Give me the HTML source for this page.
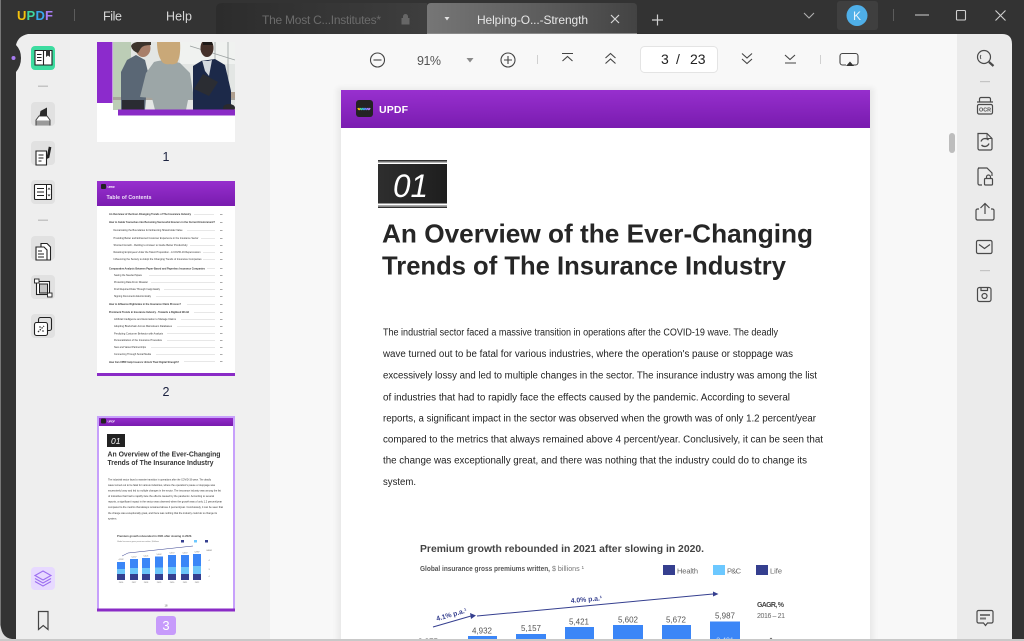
<!DOCTYPE html>
<html><head><meta charset="utf-8"><title>UPDF</title>
<style>
html,body{margin:0;padding:0;background:#333;width:1024px;height:641px;overflow:hidden}
svg{display:block;font-family:"Liberation Sans",sans-serif;filter:blur(.3px)}
</style></head><body>
<svg width="1024" height="641" viewBox="0 0 1024 641" xmlns="http://www.w3.org/2000/svg">
<defs>
<linearGradient id="hd" x1="0" y1="0" x2="0.08" y2="1"><stop offset="0" stop-color="#9830cf"/><stop offset="1" stop-color="#7a1cb0"/></linearGradient>
<linearGradient id="tab2" x1="0" x2="1" y1="0" y2="0"><stop offset="0" stop-color="#767676"/><stop offset=".55" stop-color="#5c5c5c"/><stop offset="1" stop-color="#434343"/></linearGradient>
<linearGradient id="tab1" x1="0" x2="1" y1="0" y2="0"><stop offset="0" stop-color="#2c2c2c"/><stop offset="1" stop-color="#3e3e3e"/></linearGradient>
<linearGradient id="box01" x1="0" x2="1" y1="0" y2="0"><stop offset="0" stop-color="#2e2e2e"/><stop offset="1" stop-color="#1e1e1e"/></linearGradient>
<filter id="b1" x="-5%" y="-5%" width="110%" height="110%"><feGaussianBlur stdDeviation=".25"/></filter>
<filter id="sh" x="-5%" y="-5%" width="110%" height="110%"><feGaussianBlur stdDeviation="3"/></filter>
<clipPath id="panel"><path d="M28 34H1002Q1012 34 1012 44V639H16V72Q21 66 21 58Q21 50 16 45Q18 36 28 34Z"/></clipPath>
<clipPath id="ph"><rect x="113" y="42" width="122" height="68"/></clipPath>
</defs>

<!-- window -->
<rect width="1024" height="641" fill="#333"/>
<rect x="0" width="1" height="641" fill="#777"/>
<path d="M0 625V639H16V639H12Q3 638 1 628Z" fill="#dcdcdc"/>

<!-- title bar -->
<g font-weight="bold" font-size="13">
<text x="17" y="20" fill="#f4c20d">U</text><text x="26.500" y="20" fill="#3ed6a0">P</text><text x="35.500" y="20" fill="#38a6ee">D</text><text x="45" y="20" fill="#a97cf5">F</text></g>
<rect x="74" y="9" width="1" height="12" fill="#5c5c5c"/>
<text x="103" y="20.500" font-size="12.500" fill="#d8d8d8" textLength="19">File</text>
<text x="166" y="20.500" font-size="12.500" fill="#d8d8d8" textLength="26">Help</text>

<path d="M216 34V9Q216 3 222 3H427V34Z" fill="url(#tab1)"/>
<text x="262" y="24" font-size="12" fill="#6b6b6b" textLength="119">The Most C...Institutes*</text>
<path d="M402 18.500h7v5.500h-7zM403.500 18.500v-2a2 2 0 0 1 4 0v2" fill="#666" stroke="#666"/>
<path d="M427 34V7Q427 3 431 3H633Q637 3 637 7V34Z" fill="url(#tab2)"/>
<rect x="427" y="33" width="210" height="1" fill="#8a8a8a"/>
<path d="M444.500 17h5l-2.500 3.500z" fill="#e4e4e4"/>
<text x="477" y="24" font-size="12" fill="#e6e6e6" textLength="111">Helping-O...-Strength</text>
<path d="M611 15l8 8M619 15l-8 8" stroke="#d8d8d8" stroke-width="1.200" fill="none"/>
<path d="M652 20h11M657.500 14.500v11" stroke="#d0d0d0" stroke-width="1.200" fill="none"/>

<path d="M804 13l5 5 5-5" stroke="#b0b0b0" stroke-width="1.100" fill="none"/>
<rect x="837" y="1" width="41" height="29" rx="3" fill="#3f3f3f"/>
<circle cx="857" cy="15.500" r="10.500" fill="#4fafe8"/>
<text x="857" y="20" font-size="12" fill="#e8f4fc" text-anchor="middle">K</text>
<rect x="893" y="9" width="1" height="12" fill="#5c5c5c"/>
<rect x="915" y="14.500" width="14" height="1" fill="#d0d0d0"/>
<rect x="956.500" y="10.500" width="9" height="9.500" rx="1" fill="none" stroke="#d0d0d0" stroke-width="1.100"/>
<path d="M995.500 10.500l10 10M1005.500 10.500l-10 10" stroke="#d0d0d0" stroke-width="1.100" fill="none"/>

<!-- panels -->
<g clip-path="url(#panel)">
<rect x="16" y="34" width="54" height="606" fill="#eeeeee"/>
<rect x="70" y="34" width="200" height="606" fill="#f0f0f0"/>
<rect x="270" y="34" width="687" height="606" fill="#f8f8f8"/>
<rect x="957" y="34" width="55" height="606" fill="#ebebeb"/>
<rect x="337" y="88" width="537" height="560" fill="#000" opacity=".06" filter="url(#sh)"/>
</g>
<circle cx="13.500" cy="58" r="2" fill="#a77cf0"/>

<!-- left rail icons -->
<rect x="31" y="46" width="24" height="24" rx="4" fill="#3ddca0"/>
<g stroke="#222" stroke-width="1.100" fill="#fff">
<path d="M35 50.500h8.500v14.500H35zM43.500 50.500H52v14.500h-8.500z"/>
<path d="M37 54.500h4.500M37 57.500h4.500M37 60.500h4.500" fill="none"/>
</g>
<path d="M46 50h4v7l-2-1.500-2 1.500z" fill="#333"/>
<rect x="38" y="85.500" width="10" height="1.500" fill="#c4c4c4"/>

<rect x="31" y="102" width="24" height="24" rx="4" fill="#e1e1e1"/>
<path d="M36 125v-5l3-4h8l3 4v5z" fill="#fff" stroke="#444"/>
<rect x="36.500" y="120.500" width="13" height="5" fill="#9a9a9a"/>
<path d="M39.500 116l1-5 6.500-3.500v8.500z" fill="#2a2a2a"/>

<rect x="31" y="141" width="24" height="24" rx="4" fill="#e1e1e1"/>
<path d="M36 151h10.500v14H36z" fill="#fff" stroke="#222" stroke-width="1.100"/>
<path d="M38.500 155h5M38.500 158h5M38.500 161h3" stroke="#222" fill="none"/>
<path d="M47 157l2-10 2 .5-2 10-2 1z" fill="#222" stroke="#222" stroke-width=".6"/>

<rect x="31" y="180" width="24" height="24" rx="4" fill="#e1e1e1"/>
<rect x="34.500" y="184.500" width="17" height="15" rx="1" fill="#fff" stroke="#222" stroke-width="1.100"/>
<path d="M46.500 184.500v15M37 188.500h7M37 192h7M37 195.500h7" stroke="#222" fill="none"/>
<path d="M47.500 189.500l1.500-2 1.500 2zM47.500 194.500l1.500 2 1.500-2z" fill="#333"/>

<rect x="38" y="219.500" width="10" height="1.500" fill="#c4c4c4"/>

<rect x="31" y="236" width="24" height="24" rx="4" fill="#e1e1e1"/>
<path d="M41 243.500h6l3.500 3.500v13H41z" fill="#fff" stroke="#222" stroke-width="1.100"/>
<path d="M36 247h8l3 3v10H36z" fill="#fff" stroke="#222" stroke-width="1.100"/>
<path d="M38 251h4M38 254h6M38 257h6" stroke="#222" fill="none"/>

<rect x="31" y="275" width="24" height="24" rx="4" fill="#e1e1e1"/>
<rect x="36.500" y="281.500" width="13" height="13" fill="#fff" stroke="#222" stroke-width="1.100"/>
<rect x="39.500" y="284" width="8" height="9" fill="#c4c4c4" stroke="#222" stroke-width="1"/>
<rect x="34.500" y="279" width="4.500" height="4" fill="#fff" stroke="#222" stroke-width=".9"/>
<rect x="47.500" y="293" width="4.500" height="4" fill="#fff" stroke="#222" stroke-width=".9"/>

<rect x="31" y="314" width="24" height="24" rx="4" fill="#e1e1e1"/>
<rect x="38.500" y="317.500" width="13" height="13" rx="2" fill="none" stroke="#222" stroke-width="1.100"/>
<rect x="34.500" y="322.500" width="13" height="13" rx="2" fill="#fff" stroke="#222" stroke-width="1.100"/>
<path d="M38 332l6-6M39.500 326.500l1 1M42.500 330.500l1 1" stroke="#333" stroke-width="1.300" stroke-dasharray="1.500 1" fill="none"/>

<rect x="31" y="567" width="24" height="23" rx="4" fill="#e7d9ff"/>
<g fill="none" stroke="#9b6df0" stroke-width="1.100"><path d="M43 571l8 4.500-8 4.500-8-4.500z"/><path d="M35 578.500l8 4.500 8-4.500"/><path d="M35 581.500l8 4.500 8-4.500"/></g>
<path d="M38.500 611.500h9.500v18l-4.750-4-4.750 4z" fill="none" stroke="#444" stroke-width="1.200"/>

<!-- thumbnail 1 -->
<g>
<rect x="97" y="42" width="138" height="100" fill="#fff"/>
<rect x="97" y="42" width="15.500" height="61" fill="#8c2bcc"/>
<g clip-path="url(#ph)">
<rect x="113" y="42" width="122" height="68" fill="#e3e6e4"/>
<rect x="113" y="42" width="18" height="68" fill="#bccdb6"/>
<rect x="180" y="42" width="55" height="22" fill="#f0f2f0"/>
<path d="M215 42v68M228 42v68M190 46l45 14" stroke="#9aa0a0" stroke-width=".8" fill="none"/>
<rect x="113" y="97" width="122" height="3" fill="#a8a49c"/>
<rect x="222" y="92" width="13" height="6" fill="#b0a090"/>
<ellipse cx="143" cy="48" rx="7.500" ry="9" fill="#a87f6a"/>
<path d="M131 46q2-6 20-4v3q-8 0-10 3l-3 5q-6-2-7-7z" fill="#3d342c"/>
<path d="M121 72l6-12 9-5 9 5 3 12-3 38h-24z" fill="#5a6775"/>
<rect x="122" y="100" width="22" height="10" fill="#2a2c32"/>
<path d="M154 62q12-4 26 1l10 10 4 26-6 1-2 10h-31l-3-12-12-1 6-24z" fill="#9ca6a7"/>
<path d="M157 42h23q1 14-3 21-4 2-7 1-3 1-7-1-6-7-6-21z" fill="#c9a878"/>
<ellipse cx="207" cy="48" rx="6.500" ry="9" fill="#45312a"/>
<path d="M203 42h9l1 3h-10z" fill="#1e1a18"/>
<path d="M193 66l10-6 5 0 7-1 10 6 6 26v19h-38z" fill="#1c2949"/>
<path d="M202 60l6 1 4-1-3 16-4-5z" fill="#d5dae0"/>
<path d="M194 89l9-15 15 8-9 14z" fill="#2b2d33"/>
<ellipse cx="229" cy="108" rx="6" ry="4" fill="#2a2a2e"/>
</g>
<rect x="118" y="109.500" width="117" height="6" fill="#8a2bc6"/>
</g>
<text x="166" y="161" font-size="12.500" fill="#1b2240" text-anchor="middle">1</text>

<!-- thumbnail 2 -->
<rect x="97" y="181" width="138" height="195" fill="#fff"/>
<rect x="97" y="181" width="138" height="25" fill="url(#hd)"/>
<rect x="101" y="184" width="5" height="5" rx="1" fill="#222"/>
<text x="107.500" y="188" font-size="2.800" font-weight="bold" fill="#fff">UPDF</text>
<text x="106.500" y="199" font-size="5.200" font-weight="bold" fill="#f0e4fa" textLength="45">Table of Contents</text>
<g font-size="3.100" fill="#333">
<text x="109" y="215" font-weight="bold" textLength="82" lengthAdjust="spacingAndGlyphs">An Overview of the Ever-Changing Trends of The Insurance Industry</text>
<text x="109" y="223" font-weight="bold" textLength="106" lengthAdjust="spacingAndGlyphs">How to Guide Yourselves into Becoming Successful Insurers in the Current Environment?</text>
<text x="113.500" y="231" textLength="69" lengthAdjust="spacingAndGlyphs">Demarcating the Boundaries for Enhancing Shareholder Value</text>
<text x="113.500" y="239" textLength="85" lengthAdjust="spacingAndGlyphs">Providing Better and Enhanced Customer Experience in the Insurance Sector</text>
<text x="113.500" y="246" textLength="74" lengthAdjust="spacingAndGlyphs">Shorted Growth - Retiling to Answer to Guide Better Productivity</text>
<text x="113.500" y="253" textLength="87" lengthAdjust="spacingAndGlyphs">Retaining Employees Under the Talent Proposition - A COVID-19 Repercussion</text>
<text x="113.500" y="260" textLength="88" lengthAdjust="spacingAndGlyphs">Influencing the Society to Adopt the Changing Trends of Insurance Companies</text>
<text x="109" y="269.500" font-weight="bold" textLength="96" lengthAdjust="spacingAndGlyphs">Comparative Analysis Between Paper-Based and Paperless Insurance Companies</text>
<text x="114" y="276" textLength="28" lengthAdjust="spacingAndGlyphs">Saving the Needed Space</text>
<text x="114" y="283" textLength="34" lengthAdjust="spacingAndGlyphs">Protecting Data From Disaster</text>
<text x="114" y="290" textLength="46" lengthAdjust="spacingAndGlyphs">Find Required Data Through Inapp Easily</text>
<text x="114" y="297" textLength="37" lengthAdjust="spacingAndGlyphs">Signing Documents Electronically</text>
<text x="109" y="305" font-weight="bold" textLength="72" lengthAdjust="spacingAndGlyphs">How to Influence Rightsides in the Insurance Claim Process?</text>
<text x="109" y="313" font-weight="bold" textLength="80" lengthAdjust="spacingAndGlyphs">Prominent Trends in Insurance Industry - Towards a Digitized World</text>
<text x="114" y="320" textLength="62" lengthAdjust="spacingAndGlyphs">Artificial Intelligence and Automation to Manage Claims</text>
<text x="114" y="327" textLength="58" lengthAdjust="spacingAndGlyphs">Adopting Blockchain Across Mainstream Databases</text>
<text x="114" y="334.500" textLength="49" lengthAdjust="spacingAndGlyphs">Predicting Customer Behavior with Analysis</text>
<text x="114" y="341" textLength="48" lengthAdjust="spacingAndGlyphs">Personalization of the Insurance Procedure</text>
<text x="114" y="348" textLength="32" lengthAdjust="spacingAndGlyphs">New and Varied Partnerships</text>
<text x="114" y="355" textLength="37" lengthAdjust="spacingAndGlyphs">Connecting Through Social Media</text>
<text x="109" y="363" font-weight="bold" textLength="70" lengthAdjust="spacingAndGlyphs">How Can UPDF Help Insurers Unlock Their Digital Strength?</text>
</g>
<g stroke="#cfcfcf" stroke-width=".6" fill="none">
<path d="M194 214.500h20M187 230.500h28M201 238.500h14M190 245.500h25M203 252.500h12M203 259.500h12M207 268.500h8M149 275.500h66M151 282.500h64M164 289.500h51M156 296.500h59M187 304.500h28M194 312.500h21M181 319.500h34M177 326.500h38M167 333.500h48M167 340.500h48M151 347.500h64M156 354.500h59M184 361.500h31"/>
</g>
<path d="M220 214.500h2.500M220 222.500h2.500M220 230.500h2.500M220 238.500h2.500M220 245.500h2.500M220 252.500h2.500M220 259.500h2.500M220 268.500h2.500M220 275.500h2.500M220 282.500h2.500M220 289.500h2.500M220 296.500h2.500M220 304.500h2.500M220 312.500h2.500M220 319.500h2.500M220 326.500h2.500M220 333.500h2.500M220 340.500h2.500M220 347.500h2.500M220 354.500h2.500M220 361.500h2.500" stroke="#aaa" stroke-width=".9"/>
<rect x="97" y="373" width="138" height="3" fill="#8a2bc6"/>
<text x="166" y="396" font-size="12.500" fill="#1b2240" text-anchor="middle">2</text>

<!-- thumbnail 3 -->
<rect x="97" y="416" width="138" height="195" fill="#fff"/>
<rect x="97" y="417" width="138" height="9" fill="url(#hd)"/>
<rect x="101" y="418.500" width="5" height="5" rx="1" fill="#222"/>
<text x="107.500" y="422.500" font-size="2.800" font-weight="bold" fill="#fff">UPDF</text>
<rect x="107" y="434" width="18" height="13" fill="#222"/>
<text x="111" y="444" font-size="8.500" font-style="italic" fill="#fff">01</text>
<text x="107.500" y="456.500" font-size="7" font-weight="bold" fill="#333" textLength="113" lengthAdjust="spacingAndGlyphs">An Overview of the Ever-Changing</text>
<text x="107.500" y="465" font-size="7" font-weight="bold" fill="#333" textLength="106" lengthAdjust="spacingAndGlyphs">Trends of The Insurance Industry</text>
<g font-size="2.800" fill="#333">
<text x="108" y="480.500" textLength="103" lengthAdjust="spacingAndGlyphs">The industrial sector faced a massive transition in operations after the COVID-19 wave. The deadly</text>
<text x="108" y="486" textLength="107" lengthAdjust="spacingAndGlyphs">wave turned out to be fatal for various industries, where the operation's pause or stoppage was</text>
<text x="108" y="491.500" textLength="113" lengthAdjust="spacingAndGlyphs">excessively lossy and led to multiple changes in the sector. The insurance industry was among the list</text>
<text x="108" y="497" textLength="106" lengthAdjust="spacingAndGlyphs">of industries that had to rapidly face the effects caused by the pandemic. According to several</text>
<text x="108" y="502.500" textLength="114" lengthAdjust="spacingAndGlyphs">reports, a significant impact in the sector was observed when the growth was of only 1.2 percent/year</text>
<text x="108" y="508" textLength="115" lengthAdjust="spacingAndGlyphs">compared to the metrics that always remained above 4 percent/year. Conclusively, it can be seen that</text>
<text x="108" y="514" textLength="109" lengthAdjust="spacingAndGlyphs">the change was exceptionally great, and there was nothing that the industry could do to change its</text>
<text x="108" y="519.500" textLength="9" lengthAdjust="spacingAndGlyphs">system.</text>
</g>
<g>
<text x="117" y="537" font-size="3" font-weight="bold" fill="#444" textLength="75" lengthAdjust="spacingAndGlyphs">Premium growth rebounded in 2021 after slowing in 2020.</text>
<text x="117" y="542" font-size="2" fill="#777" textLength="42" lengthAdjust="spacingAndGlyphs">Global insurance gross premiums written, $ billions</text>
<rect x="181" y="540" width="3" height="2.500" fill="#353f8f"/><rect x="194" y="540" width="3" height="2.500" fill="#6cc8ff"/><rect x="205" y="540" width="3" height="2.500" fill="#353f8f"/>
<path d="M122 556l6-3 65-7" stroke="#353f8f" stroke-width=".5" fill="none"/>
<g fill="#3b86f7"><rect x="117" y="562" width="8" height="7"/><rect x="130" y="559" width="8" height="9"/><rect x="142" y="558" width="8" height="10"/><rect x="155" y="556.500" width="8" height="11"/><rect x="168" y="555" width="8" height="12"/><rect x="181" y="555" width="8" height="12"/><rect x="193" y="554" width="8" height="12"/></g>
<g fill="#6cc5fa"><rect x="117" y="569" width="8" height="5"/><rect x="130" y="568" width="8" height="6"/><rect x="142" y="568" width="8" height="6"/><rect x="155" y="567.500" width="8" height="6.500"/><rect x="168" y="567" width="8" height="7"/><rect x="181" y="567" width="8" height="7"/><rect x="193" y="566" width="8" height="8"/></g>
<g fill="#353f8f"><rect x="117" y="574" width="8" height="6"/><rect x="130" y="574" width="8" height="6"/><rect x="142" y="574" width="8" height="6"/><rect x="155" y="574" width="8" height="6"/><rect x="168" y="574" width="8" height="6"/><rect x="181" y="574" width="8" height="6"/><rect x="193" y="574" width="8" height="6"/></g>
<g font-size="2" fill="#666" text-anchor="middle"><text x="121" y="583">2016</text><text x="134" y="583">2017</text><text x="146" y="583">2018</text><text x="159" y="583">2019</text><text x="172" y="583">2020</text><text x="185" y="583">2021</text><text x="197" y="583">2022</text>
<text x="121" y="560">4,932</text><text x="134" y="557.500">5,157</text><text x="146" y="556.500">5,421</text><text x="159" y="555">5,602</text><text x="172" y="553.500">5,672</text><text x="185" y="553.500">5,672</text><text x="197" y="552.500">5,987</text>
<text x="209" y="551">CAGR</text><text x="209" y="561">4</text><text x="209" y="570">3</text><text x="209" y="577">4</text></g>
<text x="166" y="606.500" font-size="2.600" fill="#555" text-anchor="middle">18</text>
</g>
<rect x="98" y="417" width="136" height="193" fill="none" stroke="#c7a0fb" stroke-width="2"/>
<rect x="97" y="608.500" width="138" height="3" fill="#8a2bc6"/>
<rect x="156" y="616" width="20" height="19" rx="3" fill="#c79bfb"/>
<text x="166" y="630" font-size="13" fill="#fff" text-anchor="middle">3</text>

<!-- toolbar -->
<g fill="none" stroke="#444" stroke-width="1.100">
<circle cx="377.500" cy="60" r="7"/><path d="M373.500 60h8"/>
<circle cx="508" cy="60" r="7"/><path d="M504 60h8M508 56v8"/>
<path d="M562 53.500h11M562.500 61l5-4.500 5 4.500"/>
<path d="M605.500 58l5-4.500 5 4.500M605.500 63.500l5-4.500 5 4.500"/>
<path d="M742 53.500l5 4.500 5-4.500M742 59l5 4.500 5-4.500"/>
<path d="M785 55l5 4.500 5-4.500M785 63h11"/>
<path d="M846 65h-3.500a2.500 2.500 0 0 1-2.500-2.500V56a2.500 2.500 0 0 1 2.500-2.500h13a2.500 2.500 0 0 1 2.500 2.500v6.500a2.500 2.500 0 0 1-2.500 2.500H853"/>
</g>
<path d="M846 66h8l-4-4.500z" fill="#333"/>
<rect x="537" y="55" width="1" height="9" fill="#d0d0d0"/>
<rect x="820" y="55" width="1" height="9" fill="#d0d0d0"/>
<text x="417" y="65" font-size="12.500" fill="#555" textLength="24">91%</text>
<path d="M466.500 58h7l-3.500 4.500z" fill="#8a8a8a"/>
<rect x="640.500" y="46.500" width="77" height="26" rx="4" fill="#fff" stroke="#e4e4e4"/>
<text x="661" y="64" font-size="14" fill="#222">3</text>
<text x="676" y="64" font-size="14" fill="#222">/</text>
<text x="690" y="64" font-size="14" fill="#222">23</text>

<!-- main page -->
<rect x="341" y="90" width="529" height="560" fill="#fff"/>
<rect x="341" y="90" width="529" height="38" fill="url(#hd)"/>
<rect x="356" y="100" width="17" height="17" rx="3" fill="#232323"/>
<path d="M358 108q1.200 3 2.400 0" stroke="#f4c20d" stroke-width="1.500" fill="none"/><path d="M360.400 108q1.200 3 2.400 0" stroke="#3ed6a0" stroke-width="1.500" fill="none"/><path d="M362.800 108q1.200 3 2.400 0" stroke="#38a6ee" stroke-width="1.500" fill="none"/><path d="M365.200 108q1.200 3 2.400 0" stroke="#6a7cf5" stroke-width="1.500" fill="none"/><path d="M367.600 108q1.200 3 2.400 0" stroke="#a97cf5" stroke-width="1.500" fill="none"/>
<text x="379" y="113" font-size="10.500" font-weight="bold" fill="#fff" textLength="29">UPDF</text>

<rect x="378" y="160" width="69" height="1.500" fill="#333"/>
<rect x="378" y="161.500" width="69" height="1.500" fill="#b5b5b5"/>
<rect x="378" y="164" width="69" height="39.500" fill="url(#box01)"/>
<rect x="378" y="205" width="69" height="1.200" fill="#aaa"/>
<rect x="378" y="206.500" width="69" height="1.500" fill="#333"/>
<text x="393" y="197" font-size="32" font-style="italic" fill="#fff" textLength="35" lengthAdjust="spacingAndGlyphs">01</text>

<text x="382" y="242.500" font-size="26" font-weight="bold" fill="#262626" textLength="431" lengthAdjust="spacingAndGlyphs">An Overview of the Ever-Changing</text>
<text x="382" y="274.500" font-size="26" font-weight="bold" fill="#262626" textLength="404" lengthAdjust="spacingAndGlyphs">Trends of The Insurance Industry</text>

<g font-size="10" fill="#222">
<text x="383" y="335.500" textLength="395" lengthAdjust="spacingAndGlyphs">The industrial sector faced a massive transition in operations after the COVID-19 wave. The deadly</text>
<text x="383" y="357" textLength="410" lengthAdjust="spacingAndGlyphs">wave turned out to be fatal for various industries, where the operation's pause or stoppage was</text>
<text x="383" y="378.500" textLength="434" lengthAdjust="spacingAndGlyphs">excessively lossy and led to multiple changes in the sector. The insurance industry was among the list</text>
<text x="383" y="400.500" textLength="407" lengthAdjust="spacingAndGlyphs">of industries that had to rapidly face the effects caused by the pandemic. According to several</text>
<text x="383" y="421.500" textLength="433" lengthAdjust="spacingAndGlyphs">reports, a significant impact in the sector was observed when the growth was of only 1.2 percent/year</text>
<text x="383" y="442.500" textLength="440" lengthAdjust="spacingAndGlyphs">compared to the metrics that always remained above 4 percent/year. Conclusively, it can be seen that</text>
<text x="383" y="463.500" textLength="424" lengthAdjust="spacingAndGlyphs">the change was exceptionally great, and there was nothing that the industry could do to change its</text>
<text x="383" y="485" textLength="33" lengthAdjust="spacingAndGlyphs">system.</text>
</g>

<!-- chart -->
<text x="420" y="552" font-size="10.200" font-weight="bold" fill="#444" textLength="284" lengthAdjust="spacingAndGlyphs">Premium growth rebounded in 2021 after slowing in 2020.</text>
<text x="420" y="571" font-size="7" font-weight="bold" fill="#555" textLength="130" lengthAdjust="spacingAndGlyphs">Global insurance gross premiums written,</text>
<text x="552" y="571" font-size="7" fill="#777" textLength="32" lengthAdjust="spacingAndGlyphs">$ billions ¹</text>
<rect x="663" y="565" width="12" height="10" fill="#353f8f"/>
<text x="677" y="573.500" font-size="7.500" fill="#666" textLength="21">Health</text>
<rect x="713" y="565" width="12" height="10" fill="#6cc8ff"/>
<text x="727" y="573.500" font-size="7.500" fill="#666" textLength="14">P&amp;C</text>
<rect x="756" y="565" width="12" height="10" fill="#353f8f"/>
<text x="770" y="573.500" font-size="7.500" fill="#666" textLength="12">Life</text>
<path d="M433 627l38-11M477 616l236-22" stroke="#353f8f" stroke-width="1" fill="none"/>
<path d="M470 613l6 2.500-5 3.500zM713 591.500l5.500 2.500-5.500 2.500z" fill="#353f8f"/>
<text transform="translate(437 621) rotate(-16)" font-size="6.800" font-weight="bold" fill="#353f8f">4.1% p.a.¹</text>
<text transform="translate(571 603) rotate(-5)" font-size="6.800" font-weight="bold" fill="#353f8f">4.0% p.a.¹</text>
<text x="757" y="607" font-size="7" font-weight="bold" fill="#444" textLength="27">GAGR, %</text>
<text x="757" y="618" font-size="7" fill="#666" textLength="28">2016 – 21</text>
<g fill="#3b86f7">
<rect x="468" y="636" width="29" height="4"/><rect x="516" y="634" width="30" height="6"/><rect x="565" y="627" width="29" height="13"/><rect x="613" y="625" width="30" height="15"/><rect x="662" y="625" width="29" height="15"/><rect x="710" y="621.500" width="30" height="19"/>
</g>
<g font-size="8" fill="#555" text-anchor="middle">
<text x="482" y="633.500">4,932</text><text x="531" y="631">5,157</text><text x="579" y="624.500">5,421</text><text x="628" y="622.500">5,602</text><text x="676" y="622.500">5,672</text><text x="725" y="618.500">5,987</text>
<text x="428" y="644.500">2,875</text>
</g>
<g font-size="7" fill="#cfe2fd" text-anchor="middle"><text x="628" y="644.500">2,315</text><text x="676" y="644.500">2,333</text><text x="725" y="642.500">2,401</text></g>
<circle cx="771" cy="639" r="1.200" fill="#777"/>

<!-- scrollbar -->
<rect x="949" y="133" width="6" height="20" rx="3" fill="#bdbdbd"/>

<!-- right rail icons -->
<g fill="none" stroke="#4a4a4a" stroke-width="1.200">
<circle cx="984" cy="57" r="6.500"/><path d="M981 55a3.500 3.500 0 0 0 0 4" stroke-width=".9"/>
<path d="M989 62l4.500 4" stroke-width="2.200"/>
<path d="M977 102h16M979.500 102v-3a1.500 1.500 0 0 1 1.500-1.500h8a1.500 1.500 0 0 1 1.500 1.500v3"/>
<rect x="977.500" y="104.500" width="15" height="9.500" rx="1.500"/>
<path d="M978 133.500h9l5 5v10a1.500 1.500 0 0 1-1.500 1.500h-11a1.500 1.500 0 0 1-1.500-1.500v-14z"/>
<path d="M987 133.500v4a1 1 0 0 0 1 1h4" stroke-width=".9"/>
<path d="M981 141.500a4.500 4.500 0 0 1 7.500-1.500M989 143.500a4.500 4.500 0 0 1-7.500 1.500" stroke-width="1.300"/>
<path d="M978 168h9l5 5v3M982 185h-2.500a1.500 1.500 0 0 1-1.500-1.500V169.500a1.500 1.500 0 0 1 1.500-1.500"/>
<rect x="984.500" y="178.500" width="8" height="6.500" rx="1"/><path d="M986.500 178.500v-1.500a2 2 0 0 1 4 0v1.500"/>
<path d="M979 209h-1.500a1.500 1.500 0 0 0-1.500 1.500v8a1.500 1.500 0 0 0 1.500 1.500h15a1.500 1.500 0 0 0 1.500-1.500v-8a1.500 1.500 0 0 0-1.500-1.500H991"/>
<path d="M985 214v-10M980.500 208l4.500-4.500 4.500 4.500"/>
<rect x="976.500" y="240.500" width="15.500" height="13" rx="1.500"/><path d="M979 244.500l5.500 4 5.500-4"/>
<rect x="977.500" y="287.500" width="13.500" height="14" rx="2"/>
<path d="M981 287.500v3h6.500v-3"/><circle cx="984.500" cy="296" r="2.500"/>
<path d="M978.500 610.500h13a1.500 1.500 0 0 1 1.500 1.500v9.500a1.500 1.500 0 0 1-1.500 1.500h-4l-2 2.500-2-2.500h-5a1.500 1.500 0 0 1-1.500-1.500V612a1.500 1.500 0 0 1 1.500-1.500z"/>
</g>
<rect x="980" y="614" width="10" height="2" fill="#777"/><rect x="980" y="617.500" width="6" height="2" fill="#777"/>
<text x="985" y="111.500" font-size="5.800" font-weight="bold" fill="#4a4a4a" text-anchor="middle" textLength="12" lengthAdjust="spacingAndGlyphs">OCR</text>
<rect x="980" y="81" width="10" height="1.200" fill="#c4c4c4"/>
<rect x="980" y="270" width="10" height="1.200" fill="#c4c4c4"/>

<rect x="0" y="639" width="1024" height="2" fill="#c9c9c9"/>
</svg>
</body></html>
